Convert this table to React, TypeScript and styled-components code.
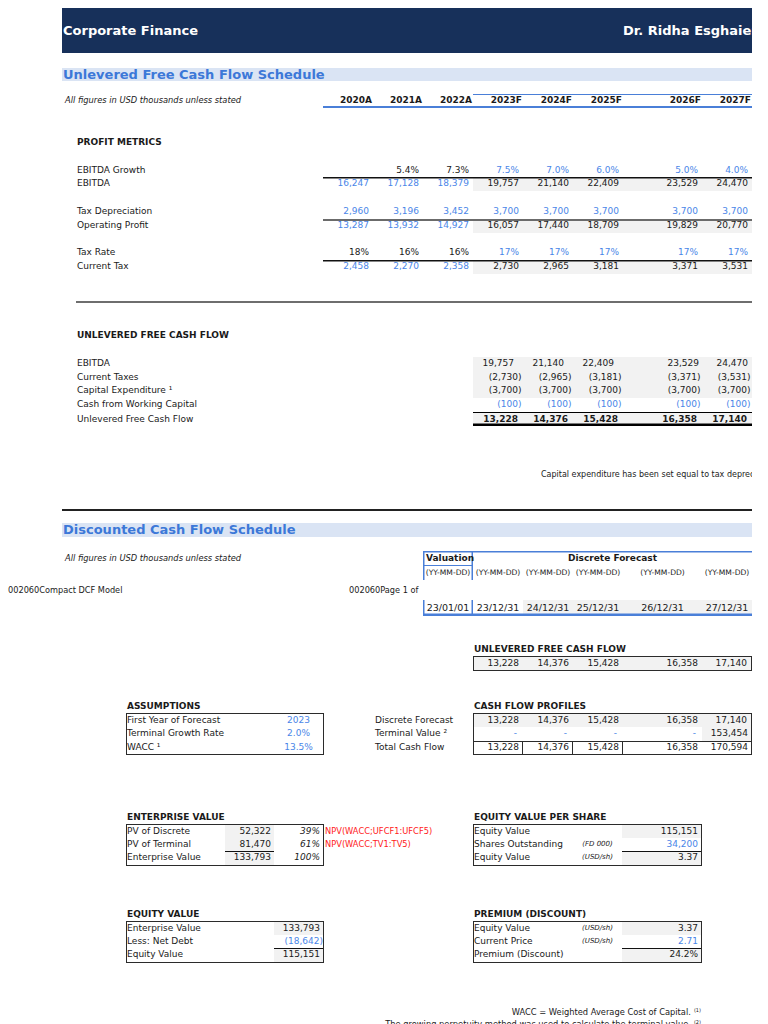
import React from "react";
import styled, { createGlobalStyle } from "styled-components";

const NAVY = "#17305a";
const BLUE = "#4a86e8";
const TITLE_BLUE = "#3c78d8";
const LINE_BLUE = "#4a7fd8";
const BAND = "#dae4f4";
const GREY = "#f2f2f2";
const INK = "#1a1a1a";
const BOXLINE = "#2b2b2b";
const FONT = `"DejaVu Sans", Verdana, sans-serif`;

const GlobalStyle = createGlobalStyle`
  html, body { margin: 0; padding: 0; background: #fff; }
  body { font-family: ${FONT}; font-size: 9px; color: ${INK}; }
  * { box-sizing: border-box; }
`;

const Page = styled.div`
  width: 768px;
  height: 1024px;
  overflow: hidden;
  padding-top: 8px;
`;

const TopBar = styled.header`
  margin-left: 62px;
  width: 690px;
  height: 45px;
  background: ${NAVY};
  color: #fff;
  font-weight: bold;
  font-size: 13px;
  display: grid;
  grid-template-columns: 560px 1fr;
  align-items: center;
  padding-left: 1px;
  white-space: nowrap;
  overflow: hidden;
`;

const TitleBand = styled.h2<{ $mt: number; $h: number }>`
  margin: ${(p) => p.$mt}px 0 0 62px;
  width: 690px;
  height: ${(p) => p.$h}px;
  line-height: ${(p) => p.$h}px;
  background: ${BAND};
  color: ${TITLE_BLUE};
  font-size: 13px;
  font-weight: bold;
  padding-left: 1px;
  white-space: nowrap;
`;

const SheetRow = styled.div<{ $mt?: number; $h?: number }>`
  display: grid;
  grid-template-columns: 323px repeat(6, 50px) 79px 50px;
  height: ${(p) => p.$h ?? 13.8}px;
  line-height: ${(p) => p.$h ?? 13.8}px;
  margin-top: ${(p) => p.$mt ?? 0}px;
  width: 752px;
`;

const Label = styled.div<{ $indent: number; $bold?: boolean; $italic?: boolean; $size?: number }>`
  padding-left: ${(p) => p.$indent}px;
  font-weight: ${(p) => (p.$bold ? "bold" : "normal")};
  font-style: ${(p) => (p.$italic ? "italic" : "normal")};
  font-size: ${(p) => p.$size ?? 9}px;
  white-space: nowrap;
`;

type CellProps = {
  $color?: string;
  $bg?: string;
  $bold?: boolean;
  $italic?: boolean;
  $top?: string;
  $topW?: number;
  $bottom?: string;
  $bottomW?: number;
  $left?: string;
  $right?: string;
  $sideW?: number;
  $pr?: number;
  $pl?: number;
  $align?: "left" | "right" | "center";
  $span?: number;
  $size?: number;
};

const shadows = (p: CellProps) => {
  const s: string[] = [];
  const w = p.$sideW ?? 1.5;
  if (p.$top) s.push(`inset 0 ${p.$topW ?? 1}px 0 ${p.$top}`);
  if (p.$bottom) s.push(`inset 0 -${p.$bottomW ?? 1}px 0 ${p.$bottom}`);
  if (p.$left) s.push(`inset ${w}px 0 0 ${p.$left}`);
  if (p.$right) s.push(`inset -${w}px 0 0 ${p.$right}`);
  return s.length ? s.join(", ") : "none";
};

const Cell = styled.div<CellProps>`
  grid-column: span ${(p) => p.$span ?? 1};
  text-align: ${(p) => p.$align ?? "right"};
  padding-right: ${(p) => p.$pr ?? 0}px;
  padding-left: ${(p) => p.$pl ?? 0}px;
  color: ${(p) => p.$color ?? INK};
  background: ${(p) => p.$bg ?? "transparent"};
  font-weight: ${(p) => (p.$bold ? "bold" : "normal")};
  font-style: ${(p) => (p.$italic ? "italic" : "normal")};
  font-size: ${(p) => p.$size ?? 9}px;
  box-shadow: ${(p) => shadows(p)};
  white-space: nowrap;
`;

const Rule = styled.div<{ $mt: number; $left: number; $h: number; $color: string }>`
  margin-top: ${(p) => p.$mt}px;
  margin-left: ${(p) => p.$left}px;
  width: ${(p) => 752 - p.$left}px;
  height: ${(p) => p.$h}px;
  background: ${(p) => p.$color};
`;

const NoteLine = styled.div<{ $mt: number }>`
  margin-top: ${(p) => p.$mt}px;
  width: 752px;
  height: 14px;
  line-height: 14px;
  padding-left: 541px;
  font-size: 8px;
  white-space: nowrap;
  overflow: hidden;
`;

const FooterOverlay = styled.div`
  display: grid;
  grid-template-columns: 341px 1fr;
  padding-left: 8px;
  height: 20px;
  line-height: 20px;
  font-size: 8.2px;
  white-space: nowrap;
`;

const LowerRow = styled.div<{ $mt: number }>`
  display: grid;
  grid-template-columns: 126px 198px 149px 279px;
  margin-top: ${(p) => p.$mt}px;
  align-items: start;
`;

const BlockTitle = styled.div<{ $col: number }>`
  grid-column: ${(p) => p.$col};
  font-weight: bold;
  font-size: 9px;
  height: 14px;
  line-height: 14px;
  padding-left: 1px;
  white-space: nowrap;
`;

const Box = styled.div<{ $col: number; $cols: string; $w: number; $rh?: number }>`
  grid-column: ${(p) => p.$col};
  width: ${(p) => p.$w}px;
  border: 1px solid ${BOXLINE};
  display: grid;
  grid-template-columns: ${(p) => p.$cols};
  grid-auto-rows: ${(p) => p.$rh ?? 13.3}px;
  line-height: ${(p) => p.$rh ?? 13.3}px;
`;

const SideStack = styled.div<{ $col: number; $indent: number; $color?: string; $size?: number }>`
  grid-column: ${(p) => p.$col};
  padding-top: 1px;
  padding-left: ${(p) => p.$indent}px;
  color: ${(p) => p.$color ?? INK};
  font-size: ${(p) => p.$size ?? 9}px;
  display: grid;
  grid-auto-rows: 13.3px;
  line-height: 13.3px;
  white-space: nowrap;
`;

const FootNote = styled.div<{ $mt?: number }>`
  margin-top: ${(p) => p.$mt ?? 0}px;
  width: 701px;
  text-align: right;
  font-size: 8.3px;
  height: 12px;
  line-height: 12px;
  white-space: nowrap;
`;

const Sup = styled.sup`
  font-size: 5px;
  vertical-align: 3px;
  margin-left: 3px;
`;

const years = ["2020A", "2021A", "2022A", "2023F", "2024F", "2025F", "2026F", "2027F"];

type Line = { color: string; w: number };

const MetricRow: React.FC<{
  label: string;
  vals: string[];
  actualBlue?: boolean;
  forecastBlue?: boolean;
  forecastGrey?: boolean;
  line?: Line;
  mt?: number;
}> = ({ label, vals, actualBlue, forecastBlue, forecastGrey, line, mt }) => (
  <SheetRow $mt={mt}>
    <Label $indent={77}>{label}</Label>
    {vals.map((v, i) => {
      const f = i >= 3;
      const blue = f ? forecastBlue : actualBlue;
      return (
        <Cell
          key={i}
          $pr={4}
          $color={blue ? BLUE : INK}
          $bg={f && forecastGrey ? GREY : undefined}
          $top={line?.color}
          $topW={line?.w}
        >
          {v}
        </Cell>
      );
    })}
  </SheetRow>
);

const ufcfPad = (v: string, i: number, bold?: boolean) => {
  if (bold) return 5;
  if (v.startsWith("(")) return 1.5;
  return i < 3 ? 9 : i === 3 ? 3 : 4;
};

const CashRow: React.FC<{
  label: string;
  vals: string[];
  blue?: boolean;
  grey?: boolean;
  bold?: boolean;
  total?: boolean;
}> = ({ label, vals, blue, grey, bold, total }) => (
  <SheetRow $h={total ? 14.5 : 13.8}>
    <Label $indent={77}>{label}</Label>
    <Cell />
    <Cell />
    <Cell />
    {vals.map((v, i) => (
      <Cell
        key={i}
        $pr={ufcfPad(v, i, bold)}
        $bold={bold}
        $color={blue ? BLUE : INK}
        $bg={grey ? GREY : undefined}
        $top={total ? "#000" : undefined}
        $bottom={total ? "#000" : undefined}
        $bottomW={2.5}
      >
        {v}
      </Cell>
    ))}
  </SheetRow>
);

const Blank = styled.div<{ $h?: number }>`
  height: ${(p) => p.$h ?? 13.8}px;
`;

const dates = ["23/12/31", "24/12/31", "25/12/31", "26/12/31", "27/12/31"];
const ufcf = ["13,228", "14,376", "15,428", "16,358", "17,140"];

export default function App() {
  return (
    <Page>
      <GlobalStyle />
      <TopBar>
        <span>Corporate Finance</span>
        <span>Dr. Ridha Esghaier</span>
      </TopBar>

      <TitleBand $mt={15} $h={13}>Unlevered Free Cash Flow Schedule</TitleBand>

      <SheetRow $mt={13}>
        <Label $indent={65} $italic $size={8.3}>
          All figures in USD thousands unless stated
        </Label>
        {years.map((y, i) => (
          <Cell
            key={y}
            $bold
            $pr={1}
            $bottom={LINE_BLUE}
            $bottomW={2}
            $top={i >= 3 ? LINE_BLUE : undefined}
          >
            {y}
          </Cell>
        ))}
      </SheetRow>

      <SheetRow $mt={28.2}>
        <Label $indent={77} $bold>
          PROFIT METRICS
        </Label>
      </SheetRow>
      <Blank />
      <MetricRow
        label="EBITDA Growth"
        vals={["", "5.4%", "7.3%", "7.5%", "7.0%", "6.0%", "5.0%", "4.0%"]}
        forecastBlue
      />
      <MetricRow
        label="EBITDA"
        vals={["16,247", "17,128", "18,379", "19,757", "21,140", "22,409", "23,529", "24,470"]}
        actualBlue
        forecastGrey
        line={{ color: "#111", w: 1.5 }}
      />
      <Blank />
      <MetricRow
        label="Tax Depreciation"
        vals={["2,960", "3,196", "3,452", "3,700", "3,700", "3,700", "3,700", "3,700"]}
        actualBlue
        forecastBlue
      />
      <MetricRow
        label="Operating Profit"
        vals={["13,287", "13,932", "14,927", "16,057", "17,440", "18,709", "19,829", "20,770"]}
        actualBlue
        forecastGrey
        line={{ color: "#6b6b6b", w: 2 }}
      />
      <Blank />
      <MetricRow
        label="Tax Rate"
        vals={["18%", "16%", "16%", "17%", "17%", "17%", "17%", "17%"]}
        forecastBlue
      />
      <MetricRow
        label="Current Tax"
        vals={["2,458", "2,270", "2,358", "2,730", "2,965", "3,181", "3,371", "3,531"]}
        actualBlue
        forecastGrey
        line={{ color: "#111", w: 1.5 }}
      />

      <Rule $mt={27} $left={76} $h={2} $color="#6e6e6e" />

      <SheetRow $mt={26.2}>
        <Label $indent={77} $bold>
          UNLEVERED FREE CASH FLOW
        </Label>
      </SheetRow>
      <Blank />
      <CashRow label="EBITDA" vals={["19,757", "21,140", "22,409", "23,529", "24,470"]} grey />
      <CashRow label="Current Taxes" vals={["(2,730)", "(2,965)", "(3,181)", "(3,371)", "(3,531)"]} grey />
      <CashRow label="Capital Expenditure ¹" vals={["(3,700)", "(3,700)", "(3,700)", "(3,700)", "(3,700)"]} grey />
      <CashRow label="Cash from Working Capital" vals={["(100)", "(100)", "(100)", "(100)", "(100)"]} blue />
      <CashRow label="Unlevered Free Cash Flow" vals={ufcf} grey bold total />

      <NoteLine $mt={41.5}>Capital expenditure has been set equal to tax depreciation.</NoteLine>

      <Rule $mt={27.5} $left={62} $h={1.5} $color="#222" />

      <TitleBand $mt={12} $h={14}>Discounted Cash Flow Schedule</TitleBand>

      <SheetRow $mt={14} $h={15}>
        <Label $indent={65} $italic $size={8.3}>
          All figures in USD thousands unless stated
        </Label>
        <Cell />
        <Cell />
        <Cell
          $align="left"
          $bold
          $pl={3}
          $left={LINE_BLUE}
          $right={LINE_BLUE}
          $top={LINE_BLUE}
          $topW={1.5}
          $bottom={LINE_BLUE}
        >
          Valuation
        </Cell>
        <Cell $span={5} $align="center" $bold $top={LINE_BLUE} $topW={1.5}>
          Discrete Forecast
        </Cell>
      </SheetRow>
      <SheetRow $h={14}>
        <div />
        <Cell />
        <Cell />
        {Array.from({ length: 6 }).map((_, i) => (
          <Cell
            key={i}
            $align="center"
            $size={7.6}
            $left={i === 0 ? LINE_BLUE : undefined}
            $right={i === 0 ? LINE_BLUE : undefined}
          >
            (YY-MM-DD)
          </Cell>
        ))}
      </SheetRow>
      <FooterOverlay>
        <span>002060Compact DCF Model</span>
        <span>002060Page 1 of</span>
      </FooterOverlay>
      <SheetRow $h={16.5}>
        <div />
        <Cell />
        <Cell />
        <Cell
          $align="center"
          $size={9.5}
          $left={LINE_BLUE}
          $right={LINE_BLUE}
          $bottom={LINE_BLUE}
          $bottomW={2.5}
        >
          23/01/01
        </Cell>
        {dates.map((d, i) => (
          <Cell
            key={d}
            $align="center"
            $size={9.5}
            $bg={i > 0 ? GREY : undefined}
            $bottom={LINE_BLUE}
            $bottomW={2.5}
          >
            {d}
          </Cell>
        ))}
      </SheetRow>

      <LowerRow $mt={26}>
        <BlockTitle $col={4}>UNLEVERED FREE CASH FLOW</BlockTitle>
        <Box $col={4} $w={279} $cols="49px 50px 50px 79px 49px" $rh={12.5}>
          {ufcf.map((v) => (
            <Cell key={v} $pr={4} $bg={GREY}>
              {v}
            </Cell>
          ))}
        </Box>
      </LowerRow>

      <LowerRow $mt={28}>
        <BlockTitle $col={2}>ASSUMPTIONS</BlockTitle>
        <BlockTitle $col={4}>CASH FLOW PROFILES</BlockTitle>
        <Box $col={2} $w={198} $cols="147px 49px">
          <Cell $align="left">First Year of Forecast</Cell>
          <Cell $align="center" $color={BLUE}>2023</Cell>
          <Cell $align="left">Terminal Growth Rate</Cell>
          <Cell $align="center" $color={BLUE}>2.0%</Cell>
          <Cell $align="left">WACC ¹</Cell>
          <Cell $align="center" $color={BLUE}>13.5%</Cell>
        </Box>
        <SideStack $col={3} $indent={51}>
          <span>Discrete Forecast</span>
          <span>Terminal Value ²</span>
          <span>Total Cash Flow</span>
        </SideStack>
        <Box $col={4} $w={279} $cols="49px 50px 50px 79px 49px">
          {ufcf.map((v) => (
            <Cell key={"a" + v} $pr={4} $bg={GREY}>
              {v}
            </Cell>
          ))}
          {["-", "-", "-", "-"].map((v, i) => (
            <Cell key={"d" + i} $pr={6} $color={BLUE}>
              {v}
            </Cell>
          ))}
          <Cell $pr={3} $bg={GREY}>153,454</Cell>
          {["13,228", "14,376", "15,428", "16,358", "170,594"].map((v, i) => (
            <Cell
              key={"t" + v}
              $pr={i === 4 ? 3 : 4}
              $top={BOXLINE}
              $right={i < 3 ? BOXLINE : undefined}
              $sideW={1}
            >
              {v}
            </Cell>
          ))}
        </Box>
      </LowerRow>

      <LowerRow $mt={55}>
        <BlockTitle $col={2}>ENTERPRISE VALUE</BlockTitle>
        <BlockTitle $col={4}>EQUITY VALUE PER SHARE</BlockTitle>
        <Box $col={2} $w={198} $cols="98px 49px 49px">
          <Cell $align="left">PV of Discrete</Cell>
          <Cell $pr={3} $bg={GREY}>52,322</Cell>
          <Cell $pr={3} $italic>39%</Cell>
          <Cell $align="left">PV of Terminal</Cell>
          <Cell $pr={3} $bg={GREY}>81,470</Cell>
          <Cell $pr={3} $italic>61%</Cell>
          <Cell $align="left">Enterprise Value</Cell>
          <Cell $pr={3} $bg={GREY} $top="#111">133,793</Cell>
          <Cell $pr={3} $italic>100%</Cell>
        </Box>
        <SideStack $col={3} $indent={1} $color="#ff1a1a" $size={8.3}>
          <span>NPV(WACC;UFCF1:UFCF5)</span>
          <span>NPV(WACC;TV1:TV5)</span>
        </SideStack>
        <Box $col={4} $w={229} $cols="99px 49px 79px">
          <Cell $align="left">Equity Value</Cell>
          <Cell />
          <Cell $pr={3} $bg={GREY}>115,151</Cell>
          <Cell $align="left">Shares Outstanding</Cell>
          <Cell $align="center" $italic $size={7}>(FD 000)</Cell>
          <Cell $pr={3} $color={BLUE}>34,200</Cell>
          <Cell $align="left">Equity Value</Cell>
          <Cell $align="center" $italic $size={7}>(USD/sh)</Cell>
          <Cell $pr={3} $bg={GREY} $top="#111">3.37</Cell>
        </Box>
      </LowerRow>

      <LowerRow $mt={41}>
        <BlockTitle $col={2}>EQUITY VALUE</BlockTitle>
        <BlockTitle $col={4}>PREMIUM (DISCOUNT)</BlockTitle>
        <Box $col={2} $w={198} $cols="147px 49px">
          <Cell $align="left">Enterprise Value</Cell>
          <Cell $pr={3} $bg={GREY}>133,793</Cell>
          <Cell $align="left">Less: Net Debt</Cell>
          <Cell $pr={0} $color={BLUE}>(18,642)</Cell>
          <Cell $align="left">Equity Value</Cell>
          <Cell $pr={3} $bg={GREY} $top="#111">115,151</Cell>
        </Box>
        <Box $col={4} $w={229} $cols="99px 49px 79px">
          <Cell $align="left">Equity Value</Cell>
          <Cell $align="center" $italic $size={7}>(USD/sh)</Cell>
          <Cell $pr={3} $bg={GREY}>3.37</Cell>
          <Cell $align="left">Current Price</Cell>
          <Cell $align="center" $italic $size={7}>(USD/sh)</Cell>
          <Cell $pr={3} $color={BLUE}>2.71</Cell>
          <Cell $align="left">Premium (Discount)</Cell>
          <Cell />
          <Cell $pr={3} $bg={GREY} $top="#111">24.2%</Cell>
        </Box>
      </LowerRow>

      <FootNote $mt={41}>
        WACC = Weighted Average Cost of Capital.<Sup>(1)</Sup>
      </FootNote>
      <FootNote>
        The growing perpetuity method was used to calculate the terminal value.<Sup>(2)</Sup>
      </FootNote>
    </Page>
  );
}
